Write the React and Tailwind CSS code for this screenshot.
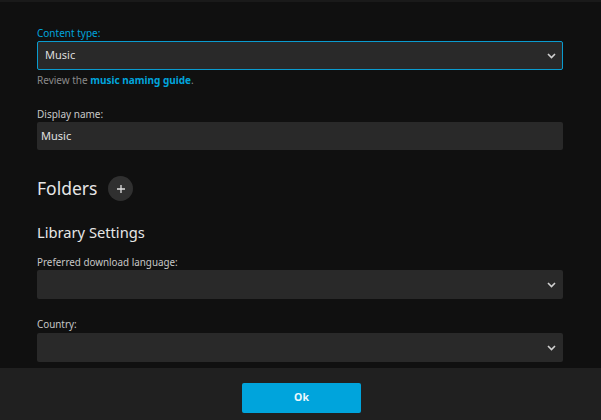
export default function App() {
  const Chevron = () => (
    <svg width="9" height="6" viewBox="0 0 9 6" className="shrink-0">
      <path d="M1 1 L4.5 4.5 L8 1" fill="none" stroke="#d0d0d0" strokeWidth="1.6" />
    </svg>
  );
  return (
    <div className="w-[601px] h-[420px] bg-[#101010] flex flex-col overflow-hidden font-['Noto_Sans',sans-serif]">
      <div className="h-[2px] bg-[#1a1a1a]" />
      <div className="flex-1 overflow-hidden pl-[37px] pr-[38px] pt-[24px]">
        <div className="text-[10px] leading-[14px] text-[#00a4dc]">Content type:</div>
        <div className="mt-[1px] h-[29px] rounded-[2px] border border-[#0a9bcf] bg-[#292929] flex items-center justify-between pl-[7px] pr-[6px]">
          <span className="text-[11px] text-[#dddddd]">Music</span>
          <Chevron />
        </div>
        <div className="mt-[4px] text-[10px] leading-[13px] text-[#8a8a8a]">
          Review the <span className="font-bold text-[#00a4dc]">music naming guide</span>.
        </div>
        <div className="mt-[20px] text-[10px] leading-[14px] text-[#c8c8c8]">Display name:</div>
        <div className="mt-[1px] h-[28px] rounded-[2px] bg-[#292929] flex items-center pl-[4px]">
          <span className="text-[11px] text-[#e0e0e0]">Music</span>
        </div>
        <div className="mt-[26px] h-[25px] flex items-center gap-[11px]">
          <span className="text-[17.5px] leading-[25px] text-[#e6e6e6]">Folders</span>
          <div className="w-[25px] h-[25px] rounded-full bg-[#303030] flex items-center justify-center">
            <svg width="10" height="10" viewBox="0 0 10 10">
              <path d="M5 1 V9 M1 5 H9" stroke="#e0e0e0" strokeWidth="1.3" />
            </svg>
          </div>
        </div>
        <div className="mt-[21px] text-[14.7px] leading-[20px] text-[#e6e6e6]">Library Settings</div>
        <div className="mt-[13px] text-[9.85px] leading-[14px] text-[#c8c8c8]">Preferred download language:</div>
        <div className="mt-[1px] h-[29px] rounded-[2px] bg-[#292929] flex items-center justify-end pr-[7px]">
          <Chevron />
        </div>
        <div className="mt-[18px] text-[9.85px] leading-[14px] text-[#c8c8c8]">Country:</div>
        <div className="mt-[2px] h-[29px] rounded-[2px] bg-[#292929] flex items-center justify-end pr-[7px]">
          <Chevron />
        </div>
      </div>
      <div className="h-[52px] shrink-0 bg-[#202020] flex justify-center pt-[15px] pl-[2px]">
        <div className="w-[119px] h-[30px] rounded-[2px] bg-[#00a4dc] flex items-center justify-center">
          <span className="text-[10.5px] font-bold text-[#eef8fc]">Ok</span>
        </div>
      </div>
    </div>
  );
}
